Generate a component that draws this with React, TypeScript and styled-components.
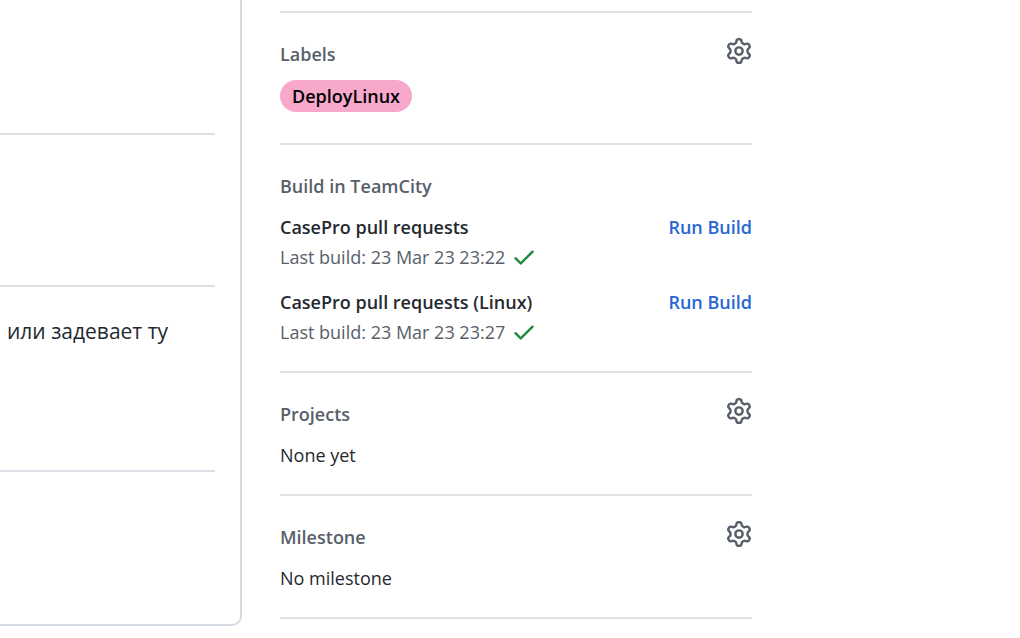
import React from 'react';
import styled, { createGlobalStyle } from 'styled-components';

const GlobalStyle = createGlobalStyle`
  *, *::before, *::after { box-sizing: border-box; }
  body {
    margin: 0;
    background: #fff;
    color: #24292f;
    font-family: 'Segoe UI', 'Open Sans', 'Noto Sans', sans-serif;
    font-size: 18px;
    line-height: 30px;
  }
`;

const Page = styled.div`
  display: flex;
  align-items: flex-start;
  gap: 38px;
  padding-right: 268px;
`;

const Discussion = styled.main`
  flex: 1;
  min-width: 0;
  padding: 0 25px 0 0;
  border: solid #d5dbe3;
  border-width: 0 2px 2px 0;
  border-bottom-right-radius: 10px;
`;

const Block = styled.section<{ $height: number; $last?: boolean }>`
  min-height: ${(p) => p.$height}px;
  padding: 28px 7px;
  border-bottom: ${(p) => (p.$last ? 'none' : '2px solid #dcdfe6')};
`;

const Comment = styled.p`
  margin: 0;
  font-size: 21px;
  line-height: 32px;
  white-space: nowrap;
`;

const Sidebar = styled.aside`
  flex: 0 1 472px;
  min-width: 0;
  padding-top: 11px;
`;

const Section = styled.section`
  display: flex;
  flex-direction: column;
  gap: 11px;
  padding: 26px 0 24px;
  border-top: 2px solid #dfe1e7;
`;

const SectionEnd = styled.hr`
  margin: 0;
  border: 0;
  border-top: 2px solid #dfe1e7;
`;

const SectionHeader = styled.header`
  display: flex;
  justify-content: space-between;
  align-items: flex-start;
`;

const SectionTitle = styled.h2`
  margin: 0;
  color: #57606a;
  font-size: 18px;
  font-weight: 600;
  line-height: 30px;
`;

const IconButton = styled.button`
  display: flex;
  align-items: center;
  height: 24px;
  padding: 0;
  border: 0;
  background: none;
  color: #57606a;
  cursor: pointer;
`;

const LabelList = styled.div`
  display: flex;
  padding-bottom: 7px;
`;

const Label = styled.a`
  padding: 0 12px;
  border-radius: 16px;
  background: #f7a8cb;
  color: #000;
  font-weight: 600;
  line-height: 32px;
  text-decoration: none;
`;

const Text = styled.p`
  margin: 0;
`;

const BuildList = styled.div`
  display: flex;
  flex-direction: column;
  gap: 15px;
`;

const Build = styled.article`
  display: flex;
  justify-content: space-between;
  align-items: flex-start;
`;

const BuildName = styled.h3`
  margin: 0;
  font-size: 18px;
  font-weight: 600;
  line-height: 30px;
`;

const BuildStatus = styled.p`
  display: flex;
  align-items: center;
  gap: 6px;
  margin: 0;
  color: #57606a;
`;

const RunButton = styled.button`
  padding: 0;
  border: 0;
  background: none;
  color: #2767d3;
  font: inherit;
  font-weight: 600;
  cursor: pointer;
`;

const GearIcon = () => (
  <svg width="26" height="26" viewBox="0 0 16 16" fill="currentColor" aria-hidden="true">
    <path d="M8 0a8.2 8.2 0 0 1 .701.031C9.444.095 9.99.645 10.16 1.29l.288 1.107c.018.066.079.158.212.224.231.114.454.243.668.386.123.082.233.09.299.071l1.103-.303c.644-.176 1.392.021 1.82.63.27.385.506.792.704 1.218.315.675.111 1.422-.364 1.891l-.814.806c-.049.048-.098.147-.088.294.016.257.016.515 0 .772-.01.147.038.246.088.294l.814.806c.475.469.679 1.216.364 1.891a7.977 7.977 0 0 1-.704 1.217c-.428.61-1.176.807-1.82.63l-1.102-.302c-.067-.019-.177-.011-.3.071a5.909 5.909 0 0 1-.668.386c-.133.066-.194.158-.211.224l-.29 1.106c-.168.646-.715 1.196-1.458 1.26a8.006 8.006 0 0 1-1.402 0c-.743-.064-1.289-.614-1.458-1.26l-.289-1.106c-.018-.066-.079-.158-.212-.224a5.738 5.738 0 0 1-.668-.386c-.123-.082-.233-.09-.299-.071l-1.103.303c-.644.176-1.392-.021-1.82-.63a8.12 8.12 0 0 1-.704-1.218c-.315-.675-.111-1.422.363-1.891l.815-.806c.05-.048.098-.147.088-.294a6.214 6.214 0 0 1 0-.772c.01-.147-.038-.246-.088-.294l-.815-.806C.635 6.045.431 5.298.746 4.623a7.92 7.92 0 0 1 .704-1.217c.428-.61 1.176-.807 1.82-.63l1.102.302c.067.019.177.011.3-.071.214-.143.437-.272.668-.386.133-.066.194-.158.211-.224l.29-1.106C6.009.645 6.556.095 7.299.03 7.53.01 7.764 0 8 0Zm-.571 1.525c-.036.003-.108.036-.137.146l-.289 1.105c-.147.561-.549.967-.998 1.189-.173.086-.34.183-.5.29-.417.278-.97.423-1.529.27l-1.103-.303c-.109-.03-.175.016-.195.045-.22.312-.412.644-.573.99-.014.031-.021.11.059.19l.815.806c.411.406.562.957.53 1.456a4.709 4.709 0 0 0 0 .582c.032.499-.119 1.05-.53 1.456l-.815.806c-.081.08-.073.159-.059.19.162.346.353.677.573.989.02.03.085.076.195.046l1.102-.303c.56-.153 1.113-.008 1.53.27.161.107.328.204.501.29.447.222.85.629.997 1.189l.289 1.105c.029.109.101.143.137.146a6.6 6.6 0 0 0 1.142 0c.036-.003.108-.036.137-.146l.289-1.105c.147-.561.549-.967.998-1.189.173-.086.34-.183.5-.29.417-.278.97-.423 1.529-.27l1.103.303c.109.029.175-.016.195-.045.22-.313.411-.644.573-.99.014-.031.021-.11-.059-.19l-.815-.806c-.411-.406-.562-.957-.53-1.456a4.709 4.709 0 0 0 0-.582c-.032-.499.119-1.05.53-1.456l.815-.806c.081-.08.073-.159.059-.19a6.464 6.464 0 0 0-.573-.989c-.02-.03-.085-.076-.195-.046l-1.102.303c-.56.153-1.113.008-1.53-.27a4.44 4.44 0 0 0-.501-.29c-.447-.222-.85-.629-.997-1.189l-.289-1.105c-.029-.11-.101-.143-.137-.146a6.6 6.6 0 0 0-1.142 0ZM11 8a3 3 0 1 1-6 0 3 3 0 0 1 6 0ZM9.5 8a1.5 1.5 0 1 0-3.001.001A1.5 1.5 0 0 0 9.5 8Z" />
  </svg>
);

const CheckIcon = () => (
  <svg width="26" height="26" viewBox="0 0 16 16" fill="#1f883d" role="img" aria-label="Success">
    <path d="M13.78 4.22a.75.75 0 0 1 0 1.06l-7.25 7.25a.75.75 0 0 1-1.06 0L2.22 9.28a.751.751 0 0 1 .018-1.042.751.751 0 0 1 1.042-.018L6 10.94l6.72-6.72a.75.75 0 0 1 1.06 0Z" />
  </svg>
);

const builds = [
  { name: 'CasePro pull requests', date: '23 Mar 23 23:22' },
  { name: 'CasePro pull requests (Linux)', date: '23 Mar 23 23:27' },
];

function SidebarSection({ title, editable, children }: {
  title: string;
  editable?: boolean;
  children: React.ReactNode;
}) {
  return (
    <Section>
      <SectionHeader>
        <SectionTitle>{title}</SectionTitle>
        {editable && (
          <IconButton type="button" aria-label={`Edit ${title}`}>
            <GearIcon />
          </IconButton>
        )}
      </SectionHeader>
      {children}
    </Section>
  );
}

export default function App() {
  return (
    <>
      <GlobalStyle />
      <Page>
        <Discussion>
          <Block $height={135} />
          <Block $height={152} />
          <Block $height={185}>
            <Comment>или задевает ту</Comment>
          </Block>
          <Block $height={152} $last />
        </Discussion>
        <Sidebar>
          <SidebarSection title="Labels" editable>
            <LabelList>
              <Label href="#">DeployLinux</Label>
            </LabelList>
          </SidebarSection>
          <SidebarSection title="Build in TeamCity">
            <BuildList>
              {builds.map((build) => (
                <Build key={build.name}>
                  <div>
                    <BuildName>{build.name}</BuildName>
                    <BuildStatus>
                      Last build: {build.date}
                      <CheckIcon />
                    </BuildStatus>
                  </div>
                  <RunButton type="button">Run Build</RunButton>
                </Build>
              ))}
            </BuildList>
          </SidebarSection>
          <SidebarSection title="Projects" editable>
            <Text>None yet</Text>
          </SidebarSection>
          <SidebarSection title="Milestone" editable>
            <Text>No milestone</Text>
          </SidebarSection>
          <SectionEnd />
        </Sidebar>
      </Page>
    </>
  );
}
